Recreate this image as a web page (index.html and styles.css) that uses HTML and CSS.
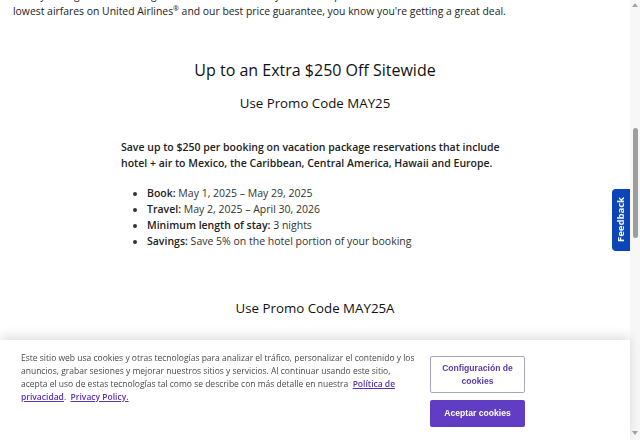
FILE: index.html
```html
<!DOCTYPE html>
<html lang="en">
<head>
    <meta charset="UTF-8">
    <meta name="viewport" content="width=device-width, initial-scale=1.0">
    <title>Vacation Packages - Promo</title>
    <link rel="stylesheet" href="styles.css">
</head>
<body>
<div class="page">
    <main class="content">
        <p class="intro">
            Book your flight and hotel together and save more on your next trip. Plus, with access to the<br>
            lowest airfares on United Airlines<sup>&reg;</sup> and our best price guarantee, you know you're getting a great deal.
        </p>

        <h2 class="offer-title">Up to an Extra $250 Off Sitewide</h2>
        <h3 class="promo-code">Use Promo Code MAY25</h3>

        <div class="offer-body">
            <p class="offer-lead">Save up to $250 per booking on vacation package reservations that include<br>
                hotel + air to Mexico, the Caribbean, Central America, Hawaii and Europe.</p>
            <ul class="offer-terms">
                <li><b>Book:</b> May 1, 2025 – May 29, 2025</li>
                <li><b>Travel:</b> May 2, 2025 – April 30, 2026</li>
                <li><b>Minimum length of stay:</b> 3 nights</li>
                <li><b>Savings:</b> Save 5% on the hotel portion of your booking</li>
            </ul>
        </div>

        <h3 class="promo-code promo-next">Use Promo Code MAY25A</h3>
    </main>

    <div class="scrollbar">
        <span class="arrow arrow-up"></span>
        <span class="thumb"></span>
        <span class="arrow arrow-down"></span>
    </div>
</div>

<button class="feedback-tab">Feedback</button>

<div class="cookie-banner">
    <p class="cookie-text">
        Este sitio web usa cookies y otras tecnologías para analizar el tráfico, personalizar el contenido y los<br>
        anuncios, grabar sesiones y mejorar nuestros sitios y servicios. Al continuar usando este sitio,<br>
        acepta el uso de estas tecnologías tal como se describe con más detalle en nuestra&nbsp;
        <a href="#">Política de</a><br><a href="#">privacidad</a>. &nbsp;<a href="#">Privacy Policy.</a>
    </p>
    <div class="cookie-actions">
        <button class="btn-outline">Configuración de cookies</button>
        <button class="btn-accept">Aceptar cookies</button>
    </div>
</div>
</body>
</html>
```

FILE: styles.css
```css
body {
    margin: 0;
    font-family: "Open Sans", "Liberation Sans", sans-serif;
    color: #222;
    background: #fff;
    overflow: hidden;
}
.page {
    display: flex;
    height: 440px;
}
.content {
    flex: 1;
    padding: 0 13px;
    overflow: hidden;
    white-space: nowrap;
}
.intro {
    margin: -13px 0 0;
    font-size: 10.4px;
    line-height: 16px;
}
.intro sup {
    font-size: 7px;
    line-height: 0;
}
.offer-title {
    margin: 39px 0 0;
    text-align: center;
    font-size: 16px;
    font-weight: 500;
    line-height: 24px;
    color: #111;
}
.promo-code {
    margin: 11px 0 0;
    text-align: center;
    font-size: 13.3px;
    font-weight: 500;
    line-height: 20px;
    color: #111;
}
.promo-next {
    margin-top: 49px;
}
.offer-body {
    width: 388px;
    margin: 0 auto;
    font-size: 10.5px;
    line-height: 16px;
}
.offer-lead {
    margin: 26px 0 0;
    font-weight: 600;
}
.offer-terms {
    margin: 14px 0 0;
    padding-left: 26px;
    color: #333;
}
.offer-terms b {
    font-weight: 600;
    color: #222;
}
.scrollbar {
    width: 10px;
    background: #f7f7f7;
    display: flex;
    flex-direction: column;
    align-items: center;
}
.arrow {
    width: 0;
    height: 0;
    border-left: 3px solid transparent;
    border-right: 3px solid transparent;
}
.arrow-up {
    margin-top: 3px;
    border-bottom: 4px solid #a3a3a3;
}
.arrow-down {
    margin-top: auto;
    margin-bottom: 5px;
    border-top: 4px solid #a3a3a3;
}
.thumb {
    width: 5px;
    height: 110px;
    margin-top: 121px;
    border-radius: 3px;
    background: #9e9e9e;
}
.feedback-tab {
    position: fixed;
    top: 189px;
    right: 10px;
    width: 18px;
    height: 62px;
    padding: 0;
    border: none;
    border-radius: 0 4px 4px 0;
    background: #0b45b8;
    color: #fff;
    font-family: "Open Sans", "Liberation Sans", sans-serif;
    font-size: 9.5px;
    font-weight: 700;
    writing-mode: vertical-rl;
    transform: rotate(180deg);
}
.cookie-banner {
    position: fixed;
    left: 0;
    bottom: 0;
    width: 630px;
    height: 100px;
    box-sizing: border-box;
    padding: 11px 0 0 21px;
    background: #fff;
    box-shadow: 0 -4px 10px rgba(0, 0, 0, 0.12);
    display: flex;
    gap: 19px;
}
.cookie-text {
    width: 390px;
    margin: 0;
    font-size: 8.5px;
    line-height: 13px;
    color: #4a4a4a;
    white-space: nowrap;
}
.cookie-text a {
    color: #5a32b4;
    font-weight: 600;
}
.cookie-actions {
    width: 95px;
    padding-top: 5px;
    display: flex;
    flex-direction: column;
    gap: 7px;
}
.cookie-actions button {
    width: 95px;
    padding: 0 6px;
    border-radius: 2px;
    font-family: "Liberation Sans", Arial, sans-serif;
    font-size: 8.6px;
    font-weight: 700;
    line-height: 13px;
}
.btn-outline {
    height: 37px;
    border: 1px solid #a9a3c4;
    background: #fff;
    color: #5a3aa8;
}
.btn-accept {
    height: 27px;
    border: none;
    background: #603dc2;
    color: #fff;
}
```
